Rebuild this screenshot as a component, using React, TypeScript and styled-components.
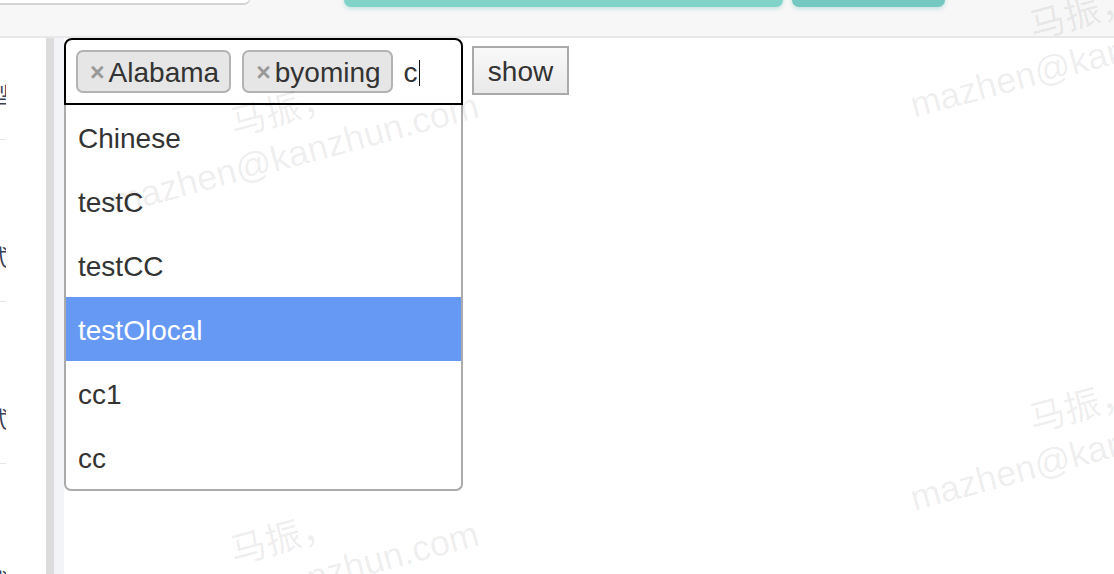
import React from "react";
import styled, { createGlobalStyle } from "styled-components";

const GlobalStyle = createGlobalStyle`
  html, body { margin: 0; padding: 0; background: #ffffff; }
  body { font-family: "Liberation Sans", Arial, sans-serif; overflow: hidden; }
  * { box-sizing: border-box; }
`;

const Page = styled.div`
  position: relative;
  width: 1114px;
  height: 574px;
  overflow: hidden;
  display: flex;
  flex-direction: column;
  background: #ffffff;
`;

const Header = styled.header`
  flex: 0 0 38px;
  height: 38px;
  background: #f7f7f7;
  border-bottom: 2px solid #e8e8e8;
  overflow: hidden;
`;

const HeaderRow = styled.div`
  display: flex;
  align-items: flex-start;
  margin-top: -30px;
`;

const SearchBox = styled.div`
  width: 262px;
  height: 35px;
  margin-left: -12px;
  background: #ffffff;
  border: 1px solid #d4d4d4;
  border-bottom-width: 2px;
  border-radius: 6px;
`;

const TealButton = styled.div<{ $w: number; $ml: number; $c: string }>`
  width: ${(p) => p.$w}px;
  height: 37px;
  margin-left: ${(p) => p.$ml}px;
  background: ${(p) => p.$c};
  border-radius: 7px;
  box-shadow: 0 2px 4px rgba(100, 190, 180, 0.35);
`;

const Body = styled.div`
  flex: 1;
  display: flex;
  min-height: 0;
`;

const SideClip = styled.nav`
  width: 6px;
  overflow: hidden;
  background: #ffffff;
`;

const SideList = styled.div`
  margin-top: -60px;
  margin-left: -40px;
  width: 46px;
`;

const SideItem = styled.div`
  height: 162px;
  border-bottom: 1px solid #e3e5ea;
  display: flex;
  align-items: flex-start;
  justify-content: flex-end;
  padding-top: 103px;
`;

const SideLabel = styled.span`
  font-family: "Noto Sans CJK SC", sans-serif;
  font-size: 22px;
  line-height: 24px;
  color: #3b4056;
  margin-right: -3px;
`;

const SideGap = styled.div`
  width: 40px;
  background: #ffffff;
`;

const ScrollTrack = styled.div`
  width: 8px;
  background: #dcdcdc;
`;

const ScrollEdge = styled.div`
  width: 10px;
  background: #f3f4f8;
`;

const Main = styled.main`
  flex: 1;
  display: flex;
  align-items: flex-start;
  gap: 9px;
  background: #ffffff;
`;

const Select = styled.div`
  width: 399px;
  display: flex;
  flex-direction: column;
`;

const Control = styled.div`
  height: 67px;
  border: 2px solid #000000;
  border-radius: 8px 8px 0 0;
  display: flex;
  align-items: center;
  gap: 11px;
  padding: 0 10px;
  background: #ffffff;
`;

const Tag = styled.span`
  display: inline-flex;
  align-items: center;
  height: 43px;
  padding: 2px 10px 0 12px;
  background: #e6e6e6;
  border: 2px solid #b3b3b3;
  border-radius: 7px;
  font-size: 28px;
  color: #333333;
`;

const TagX = styled.span`
  font-size: 25px;
  font-weight: bold;
  color: #999999;
  margin-right: 4px;
  line-height: 1;
`;

const Typed = styled.span`
  display: inline-flex;
  align-items: center;
  font-size: 28px;
  color: #333333;
  padding-top: 2px;
`;

const Caret = styled.span`
  display: inline-block;
  width: 1.5px;
  height: 26px;
  background: #111111;
  margin-left: 1px;
`;

const Menu = styled.ul`
  list-style: none;
  margin: 0;
  padding: 0;
  border: 2px solid #ababab;
  border-top: none;
  border-radius: 0 0 7px 7px;
  background: #ffffff;
  overflow: hidden;
`;

const Option = styled.li<{ $active?: boolean }>`
  height: 64px;
  display: flex;
  align-items: center;
  padding: 3px 0 0 12px;
  font-size: 28px;
  color: ${(p) => (p.$active ? "#ffffff" : "#333333")};
  background: ${(p) => (p.$active ? "#6699f3" : "transparent")};
`;

const ShowButton = styled.button`
  margin-top: 8px;
  width: 97px;
  height: 49px;
  border: 2px solid #a9a9a9;
  background: linear-gradient(#f9f9f9, #e9e9e9);
  font-family: "Liberation Sans", Arial, sans-serif;
  font-size: 28px;
  color: #333333;
  padding: 2px 0 0;
`;

const Overlay = styled.div`
  position: absolute;
  inset: 0;
  pointer-events: none;
  z-index: 10;
`;

const Mark = styled.div<{ $x: number; $y: number }>`
  position: absolute;
  left: ${(p) => p.$x}px;
  top: ${(p) => p.$y}px;
  width: 400px;
  text-align: center;
  font-family: "Liberation Sans", "Noto Sans CJK SC", sans-serif;
  font-size: 36px;
  line-height: 45px;
  color: rgba(0, 0, 0, 0.08);
  transform: rotate(-15deg);
  white-space: nowrap;
`;

const options = ["Chinese", "testC", "testCC", "testOlocal", "cc1", "cc"];
const sideLabels = ["型", "式", "式", "式"];
const marks = [
  { x: 89, y: 87 },
  { x: 89, y: 515 },
  { x: 888, y: -10 },
  { x: 888, y: 383 },
];

export default function App() {
  return (
    <>
      <GlobalStyle />
      <Page>
        <Header>
          <HeaderRow>
            <SearchBox />
            <TealButton $w={439} $ml={94} $c="#81d3c9" />
            <TealButton $w={153} $ml={9} $c="#74c8c1" />
          </HeaderRow>
        </Header>
        <Body>
          <SideClip>
            <SideList>
              {sideLabels.map((l, i) => (
                <SideItem key={i}>
                  <SideLabel>{l}</SideLabel>
                </SideItem>
              ))}
            </SideList>
          </SideClip>
          <SideGap />
          <ScrollTrack />
          <ScrollEdge />
          <Main>
            <Select>
              <Control>
                <Tag>
                  <TagX>×</TagX>Alabama
                </Tag>
                <Tag>
                  <TagX>×</TagX>byoming
                </Tag>
                <Typed>
                  c<Caret />
                </Typed>
              </Control>
              <Menu>
                {options.map((o) => (
                  <Option key={o} $active={o === "testOlocal"}>
                    {o}
                  </Option>
                ))}
              </Menu>
            </Select>
            <ShowButton>show</ShowButton>
          </Main>
        </Body>
        <Overlay>
          {marks.map((m, i) => (
            <Mark key={i} $x={m.x} $y={m.y}>
              马振，
              <br />
              mazhen@kanzhun.com
            </Mark>
          ))}
        </Overlay>
      </Page>
    </>
  );
}
